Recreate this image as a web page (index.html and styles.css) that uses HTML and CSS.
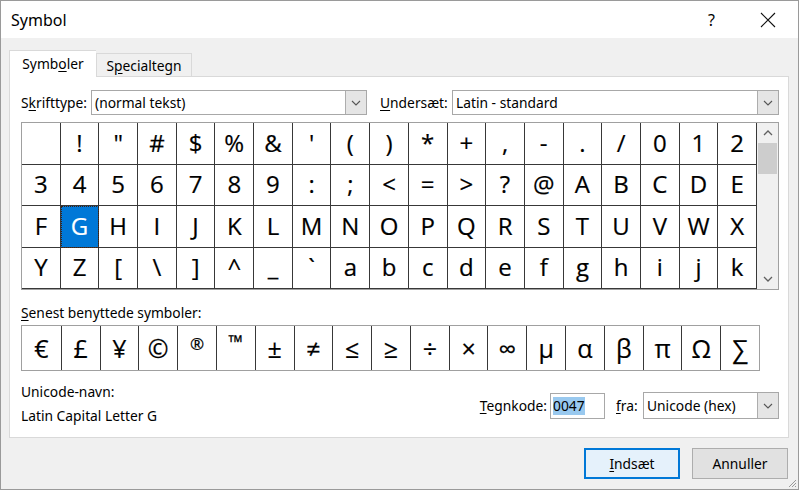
FILE: index.html
```html
<!DOCTYPE html>
<html lang="da">
<head>
<meta charset="utf-8">
<title>Symbol</title>
<link rel="stylesheet" href="styles.css">
</head>
<body>
<div class="window">
  <div class="titlebar">
    <span class="title">Symbol</span>
    <span class="help">?</span>
    <span class="close">
      <svg width="16" height="16" viewBox="0 0 16 16"><path d="M1 1 L15 15 M15 1 L1 15" stroke="#111" stroke-width="1.1" fill="none"/></svg>
    </span>
  </div>
  <div class="body">
    <div class="tabs">
      <div class="tab active">Symb<u>o</u>ler</div>
      <div class="tab">S<u>p</u>ecialtegn</div>
    </div>
    <div class="panel">
      <div class="font-row">
        <span class="lbl font-lbl">S<u>k</u>rifttype:</span>
        <div class="select font-select">
          <span class="val">(normal tekst)</span>
          <span class="drop"><svg width="10" height="6" viewBox="0 0 10 6"><path d="M1 1 L5 5 L9 1" stroke="#555" stroke-width="1.1" fill="none"/></svg></span>
        </div>
        <span class="lbl subset-lbl"><u>U</u>ndersæt:</span>
        <div class="select subset-select">
          <span class="val">Latin - standard</span>
          <span class="drop"><svg width="10" height="6" viewBox="0 0 10 6"><path d="M1 1 L5 5 L9 1" stroke="#555" stroke-width="1.1" fill="none"/></svg></span>
        </div>
      </div>
      <div class="charmap">
        <div class="chars">
          <span class="cell"></span><span class="cell">!</span><span class="cell">"</span><span class="cell">#</span><span class="cell">$</span><span class="cell">%</span><span class="cell">&amp;</span><span class="cell">'</span><span class="cell">(</span><span class="cell">)</span><span class="cell">*</span><span class="cell">+</span><span class="cell">,</span><span class="cell">-</span><span class="cell">.</span><span class="cell">/</span><span class="cell">0</span><span class="cell">1</span><span class="cell">2</span>
          <span class="cell">3</span><span class="cell">4</span><span class="cell">5</span><span class="cell">6</span><span class="cell">7</span><span class="cell">8</span><span class="cell">9</span><span class="cell">:</span><span class="cell">;</span><span class="cell">&lt;</span><span class="cell">=</span><span class="cell">&gt;</span><span class="cell">?</span><span class="cell">@</span><span class="cell">A</span><span class="cell">B</span><span class="cell">C</span><span class="cell">D</span><span class="cell">E</span>
          <span class="cell">F</span><span class="cell selected">G</span><span class="cell">H</span><span class="cell">I</span><span class="cell">J</span><span class="cell">K</span><span class="cell">L</span><span class="cell">M</span><span class="cell">N</span><span class="cell">O</span><span class="cell">P</span><span class="cell">Q</span><span class="cell">R</span><span class="cell">S</span><span class="cell">T</span><span class="cell">U</span><span class="cell">V</span><span class="cell">W</span><span class="cell">X</span>
          <span class="cell">Y</span><span class="cell">Z</span><span class="cell">[</span><span class="cell">\</span><span class="cell">]</span><span class="cell">^</span><span class="cell">_</span><span class="cell">`</span><span class="cell">a</span><span class="cell">b</span><span class="cell">c</span><span class="cell">d</span><span class="cell">e</span><span class="cell">f</span><span class="cell">g</span><span class="cell">h</span><span class="cell">i</span><span class="cell">j</span><span class="cell">k</span>
        </div>
        <div class="vscroll">
          <span class="arrow"><svg width="10" height="6" viewBox="0 0 10 6"><path d="M1 5 L5 1 L9 5" stroke="#606060" stroke-width="1.3" fill="none"/></svg></span>
          <span class="thumb"></span>
          <span class="track"></span>
          <span class="arrow"><svg width="10" height="6" viewBox="0 0 10 6"><path d="M1 1 L5 5 L9 1" stroke="#606060" stroke-width="1.3" fill="none"/></svg></span>
        </div>
      </div>
      <div class="recent-lbl"><u>S</u>enest benyttede symboler:</div>
      <div class="recent">
        <span class="rcell">€</span><span class="rcell">£</span><span class="rcell">¥</span><span class="rcell">©</span><span class="rcell sup">®</span><span class="rcell sup tm">™</span><span class="rcell">±</span><span class="rcell">≠</span><span class="rcell">≤</span><span class="rcell">≥</span><span class="rcell">÷</span><span class="rcell">×</span><span class="rcell">∞</span><span class="rcell">μ</span><span class="rcell">α</span><span class="rcell">β</span><span class="rcell">π</span><span class="rcell">Ω</span><span class="rcell">∑</span>
      </div>
      <div class="info-row">
        <div class="uname">
          <div>Unicode-navn:</div>
          <div class="uname-val">Latin Capital Letter G</div>
        </div>
        <div class="code">
          <span class="lbl"><u>T</u>egnkode:</span>
          <span class="input"><span class="hl">0047</span></span>
          <span class="lbl fra-lbl"><u>f</u>ra:</span>
          <div class="select from-select">
            <span class="val">Unicode (hex)</span>
            <span class="drop"><svg width="10" height="6" viewBox="0 0 10 6"><path d="M1 1 L5 5 L9 1" stroke="#555" stroke-width="1.1" fill="none"/></svg></span>
          </div>
        </div>
      </div>
    </div>
    <div class="buttons">
      <span class="btn default"><u>I</u>ndsæt</span>
      <span class="btn">Annuller</span>
    </div>
    <svg class="grip" width="10" height="10" viewBox="0 0 10 10">
      <path d="M9 2 L2 9 M9 5 L5 9 M9 8 L8 9" stroke="#9a9a9a" stroke-width="1" fill="none"/>
    </svg>
  </div>
</div>
</body>
</html>
```
FILE: styles.css
```css
html, body {
  margin: 0;
  padding: 0;
  background: #ffffff;
}
body {
  font-family: "Noto Sans", "Open Sans", sans-serif;
  font-size: 13.8px;
  color: #000;
}
u {
  text-decoration: underline;
  text-underline-offset: 2px;
}
.window {
  width: 799px;
  height: 490px;
  box-sizing: border-box;
  border: 1px solid #9a9a9a;
  display: flex;
  flex-direction: column;
  position: relative;
  background: #f0f0f0;
}
.titlebar {
  height: 37px;
  background: #fff;
  display: flex;
  align-items: center;
  padding-left: 10px;
  flex: none;
}
.title {
  font-size: 16px;
  flex: 1;
  margin-top: 1px;
}
.help {
  font-size: 16px;
  width: 20px;
  margin-right: 32px;
  margin-top: 1px;
}
.close {
  width: 16px;
  height: 16px;
  margin-right: 22px;
  display: flex;
}
.body {
  flex: 1;
  padding: 12px 9px 0 8px;
  position: relative;
}
.tabs {
  display: flex;
  align-items: flex-end;
  height: 26px;
  position: relative;
  z-index: 2;
}
.tab {
  height: 23px;
  box-sizing: border-box;
  border: 1px solid #d9d9d9;
  border-bottom: none;
  padding: 0 4px;
  display: flex;
  align-items: center;
  background: #f0f0f0;
  width: 96px;
  justify-content: center;
}
.tab.active {
  height: 27px;
  margin-bottom: -1px;
  background: #fff;
  width: 87px;
  border-right: none;
  padding-bottom: 1px;
}
.panel {
  background: #fff;
  border: 1px solid #d9d9d9;
  height: 362px;
  box-sizing: border-box;
  padding: 13px 9px 0 11px;
  display: flex;
  flex-direction: column;
}
.font-row {
  display: flex;
  align-items: center;
  height: 25px;
}
.lbl {
  white-space: nowrap;
}
.font-lbl {
  width: 70px;
}
.subset-lbl {
  width: 72px;
  margin-left: 13px;
}
.select {
  height: 25px;
  box-sizing: border-box;
  border: 1px solid #a8a8a8;
  display: flex;
  align-items: stretch;
  background: #fff;
}
.select .val {
  flex: 1;
  display: flex;
  align-items: center;
  padding-left: 3px;
}
.select .drop {
  width: 20px;
  background: #e5e5e5;
  border-left: 1px solid #adadad;
  display: flex;
  align-items: center;
  justify-content: center;
}
.font-select {
  width: 276px;
}
.subset-select {
  flex: 1;
}
.charmap {
  margin-top: 7px;
  display: flex;
  border: 1px solid #a0a0a0;
  height: 168px;
  box-sizing: border-box;
}
.chars {
  width: 735px;
  display: grid;
  grid-template-columns: repeat(19, 1fr);
  grid-template-rows: repeat(4, 1fr);
}
.cell {
  border-right: 1.5px solid #383838;
  border-bottom: 1.5px solid #383838;
  display: flex;
  align-items: center;
  justify-content: center;
  font-family: "Open Sans", "Noto Sans", sans-serif;
  font-size: 24px;
  line-height: 1;
  padding-bottom: 1px;
  -webkit-text-stroke: 0.2px #000;
}
.cell.selected {
  background: #0078d7;
  color: #fff;
  -webkit-text-stroke: 0.2px #fff;
  outline: 1px dotted #402010;
  outline-offset: -1px;
}
.vscroll {
  flex: 1;
  background: #f0f0f0;
  display: flex;
  flex-direction: column;
}
.arrow {
  height: 20px;
  display: flex;
  align-items: center;
  justify-content: center;
}
.thumb {
  height: 31px;
  background: #cdcdcd;
  margin: 0 1px;
}
.track {
  flex: 1;
}
.recent-lbl {
  margin-top: 15px;
  height: 16px;
  line-height: 16px;
}
.recent {
  margin-top: 4px;
  width: 739px;
  height: 46px;
  box-sizing: border-box;
  border: 1px solid #a0a0a0;
  display: grid;
  grid-template-columns: repeat(19, 1fr);
}
.rcell {
  border-left: 1.5px solid #383838;
  display: flex;
  align-items: center;
  justify-content: center;
  font-family: "Open Sans", "Noto Sans", sans-serif;
  font-size: 25px;
  line-height: 1;
  -webkit-text-stroke: 0.2px #000;
}
.rcell:first-child {
  border-left: none;
}
.rcell.sup {
  font-size: 17px;
  align-items: flex-start;
  padding-top: 9px;
}
.rcell.tm {
  font-size: 19px;
  padding-top: 7px;
}
.info-row {
  display: flex;
  margin-top: 12px;
}
.uname {
  flex: 1;
  display: flex;
  flex-direction: column;
  gap: 6px;
  line-height: 18px;
}
.code {
  display: flex;
  align-items: center;
  margin-top: 9px;
  height: 27px;
}
.input {
  width: 55px;
  height: 26px;
  box-sizing: border-box;
  border: 1px solid #a8a8a8;
  margin-left: 3px;
  display: flex;
  align-items: center;
  padding-left: 2px;
}
.hl {
  background: #99c9ef;
  line-height: 18px;
}
.fra-lbl {
  margin-left: 11px;
  width: 27px;
}
.from-select {
  width: 136px;
  height: 27px;
}
.buttons {
  display: flex;
  justify-content: flex-end;
  gap: 12px;
  margin-top: 10px;
  padding-right: 1px;
}
.btn {
  width: 96px;
  height: 31px;
  box-sizing: border-box;
  border: 1px solid #adadad;
  background: #e1e1e1;
  display: flex;
  align-items: center;
  justify-content: center;
}
.btn.default {
  border: 2px solid #0078d7;
  background: #e5f1fb;
}
.grip {
  position: absolute;
  right: 1px;
  bottom: 1px;
}
```
